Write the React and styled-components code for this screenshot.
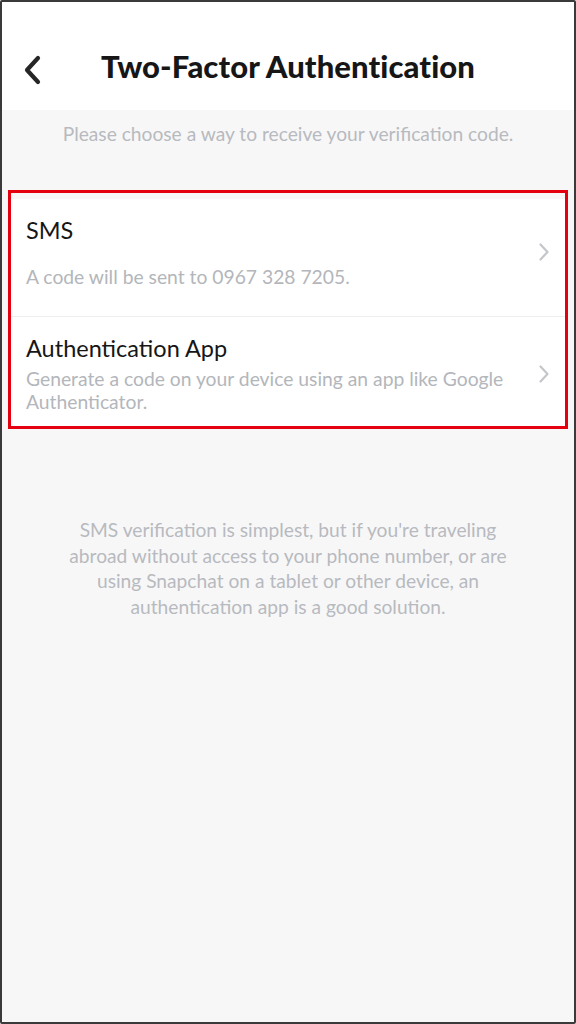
import React from 'react'
import styled, { createGlobalStyle } from 'styled-components'

const GlobalStyle = createGlobalStyle`
  html, body {
    margin: 0;
    padding: 0;
    background: #f7f7f7;
  }
  * {
    box-sizing: border-box;
  }
`;

const Screen = styled.div`
  width: 576px;
  height: 1024px;
  border: 2px solid #3a3a3a;
  border-radius: 2px;
  background: #f7f7f7;
  font-family: Lato, "Noto Sans", sans-serif;
  display: flex;
  flex-direction: column;
  overflow: hidden;
`;

const Header = styled.header`
  height: 108px;
  background: #fff;
  display: flex;
  align-items: center;
  padding: 20px 20px 0;
  position: relative;
`;

const BackButton = styled.button`
  position: absolute;
  left: 17px;
  top: 50px;
  width: 30px;
  height: 36px;
  border: none;
  background: none;
  padding: 0;
  cursor: pointer;
`;

const Title = styled.h1`
  flex: 1;
  margin: 0;
  text-align: center;
  font-size: 31px;
  font-weight: 900;
  color: #161616;
  letter-spacing: 0.1px;
`;

const Hint = styled.p`
  margin: 12px 0 0;
  text-align: center;
  font-size: 19.2px;
  color: #b7babf;
`;

const Highlight = styled.div`
  margin: 45px 6px 0;
  border: 3px solid #e4000f;
  padding-top: 6px;
`;

const List = styled.div`
  background: #fff;
`;

const Row = styled.div`
  display: flex;
  align-items: center;
  padding: ${(p) => p.$pad};
  border-top: ${(p) => (p.$divider ? '1px solid #efefef' : 'none')};
`;

const RowText = styled.div`
  flex: 1;
  display: flex;
  flex-direction: column;
  gap: ${(p) => p.$gap};
`;

const RowTitle = styled.div`
  font-size: 23.5px;
  color: #161616;
  line-height: 28px;
`;

const RowSub = styled.div`
  font-size: 19.3px;
  color: #b3b6bb;
  line-height: 23px;
  padding-right: 8px;
`;

const Chevron = styled.svg`
  width: 12px;
  height: 20px;
  flex-shrink: 0;
  margin-right: 1px;
`;

const Note = styled.p`
  margin: 88px auto 0;
  width: 452px;
  text-align: center;
  font-size: 19.2px;
  line-height: 25.5px;
  color: #b7babf;
`;

const ChevronRight = () => (
  <Chevron viewBox="0 0 12 20">
    <path d="M2.5 2.5 L9.5 10 L2.5 17.5" fill="none" stroke="#c4c6ca" strokeWidth="2.2" strokeLinecap="round" strokeLinejoin="round" />
  </Chevron>
);

const options = [
  { id: 'sms', title: 'SMS', sub: 'A code will be sent to 0967 328 7205.', pad: '17px 14px 28px 15px', gap: '21px' },
  { id: 'app', title: 'Authentication App', sub: 'Generate a code on your device using an app like Google Authenticator.', pad: '17px 14px 13px 15px', gap: '5px' },
];

export default function App() {
  return (
    <>
      <GlobalStyle />
      <Screen>
        <Header>
          <BackButton aria-label="Back">
            <svg width="30" height="36" viewBox="0 0 30 36">
              <path d="M19 6 L8 18 L19 30" fill="none" stroke="#262626" strokeWidth="4.2" strokeLinecap="round" strokeLinejoin="round" />
            </svg>
          </BackButton>
          <Title>Two-Factor Authentication</Title>
        </Header>
        <Hint>Please choose a way to receive your verification code.</Hint>
        <Highlight>
          <List>
            {options.map((o, i) => (
              <Row key={o.id} $pad={o.pad} $divider={i > 0}>
                <RowText $gap={o.gap}>
                  <RowTitle>{o.title}</RowTitle>
                  <RowSub>{o.sub}</RowSub>
                </RowText>
                <ChevronRight />
              </Row>
            ))}
          </List>
        </Highlight>
        <Note>
          SMS verification is simplest, but if you're traveling abroad without access to your phone number, or are using Snapchat on a tablet or other device, an authentication app is a good solution.
        </Note>
      </Screen>
    </>
  );
}
